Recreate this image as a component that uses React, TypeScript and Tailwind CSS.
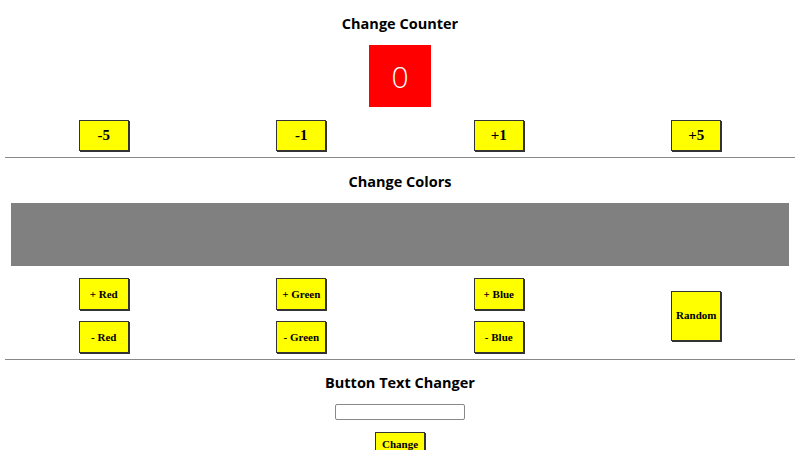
import { useState } from "react";

const btn =
    "w-[50px] bg-[#ffff00] border border-[#333] shadow-[1px_1px_0_#333] font-bold text-black font-['Liberation_Serif',serif] cursor-pointer";

export default function App() {
    const [count, setCount] = useState(0);
    const [rgb, setRgb] = useState([128, 128, 128]);
    const [text, setText] = useState("");
    const [label, setLabel] = useState("Change");

    const shift = (i: number, d: number) =>
        setRgb((c) => c.map((v, j) => (j === i ? Math.min(255, Math.max(0, v + d)) : v)));

    const names = ["Red", "Green", "Blue"];

    return (
        <main className="min-h-screen bg-white px-[5px] font-['Open_Sans',sans-serif] text-black">
            <h2 className="pt-[13px] text-center text-[14.5px] leading-[22px] font-bold">Change Counter</h2>
            <div className="mx-auto mt-[10px] flex h-[62px] w-[62px] items-center justify-center bg-[#ff0000] text-[30px] font-light text-white">
                {count}
            </div>
            <div className="mt-[13px] grid grid-cols-4 justify-items-center">
                {[-5, -1, 1, 5].map((n) => (
                    <button key={n} className={`${btn} h-[31px] text-[15px]`} onClick={() => setCount(count + n)}>
                        {n > 0 ? `+${n}` : n}
                    </button>
                ))}
            </div>
            <hr className="mt-[6px] border-t border-[#888]" />

            <h2 className="mt-[13px] text-center text-[14.5px] leading-[22px] font-bold">Change Colors</h2>
            <div
                className="mx-[6px] mt-[10px] h-[63px]"
                style={{ backgroundColor: `rgb(${rgb[0]},${rgb[1]},${rgb[2]})` }}
            />
            <div className="mt-[12px] grid grid-cols-4 justify-items-center">
                {names.map((name, i) => (
                    <div key={name} className="flex flex-col gap-[11px]">
                        <button className={`${btn} h-[32px] text-[11px]`} onClick={() => shift(i, 10)}>
                            + {name}
                        </button>
                        <button className={`${btn} h-[32px] text-[11px]`} onClick={() => shift(i, -10)}>
                            - {name}
                        </button>
                    </div>
                ))}
                <div className="flex items-center">
                    <button
                        className={`${btn} h-[50px] text-[11px]`}
                        onClick={() =>
                            setRgb([0, 0, 0].map(() => Math.floor(Math.random() * 256)))
                        }
                    >
                        Random
                    </button>
                </div>
            </div>
            <hr className="mt-[6px] border-t border-[#888]" />

            <h2 className="mt-[12px] text-center text-[14.5px] leading-[22px] font-bold">Button Text Changer</h2>
            <div className="mt-[10px] flex justify-center">
                <input
                    className="h-[16px] w-[130px] rounded-[2px] border border-[#888] px-1 text-[11px] outline-none"
                    value={text}
                    onChange={(e) => setText(e.target.value)}
                />
            </div>
            <div className="mt-[12px] flex justify-center">
                <button className={`${btn} h-[24px] text-[11px]`} onClick={() => setLabel(text || "Change")}>
                    {label}
                </button>
            </div>
        </main>
    );
}
